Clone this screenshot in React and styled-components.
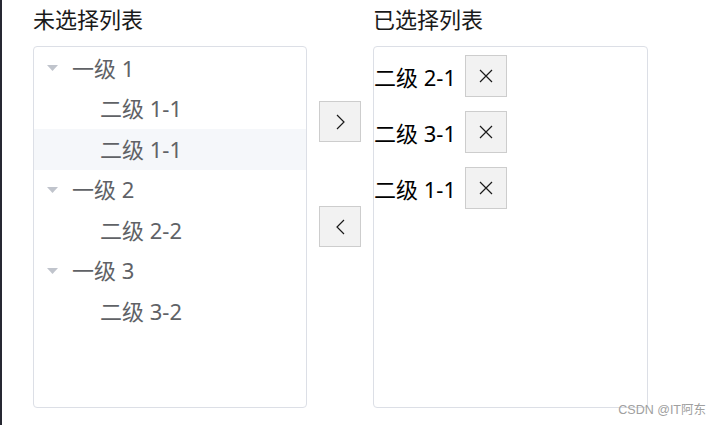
import React from 'react';
import styled, { createGlobalStyle } from 'styled-components';

const GlobalStyle = createGlobalStyle`
  html, body {
    margin: 0;
    padding: 0;
    background: #ffffff;
  }
  body {
    font-family: "Noto Sans", "Noto Sans CJK SC", sans-serif;
  }
`;

const Page = styled.div`
  position: relative;
  height: 425px;
  box-sizing: border-box;
  border-left: 2px solid #262832;
  padding-left: 31px;
  display: flex;
  align-items: flex-start;
`;

const Column = styled.div`
  display: flex;
  flex-direction: column;
`;

const Title = styled.div`
  height: 46px;
  line-height: 38px;
  font-size: 22px;
  color: #1a1a1a;
`;

const Panel = styled.div`
  box-sizing: border-box;
  width: ${(p) => p.width}px;
  height: 362px;
  border: 1px solid #dcdfe6;
  border-radius: 4px;
  padding-top: 1px;
`;

const TreeRow = styled.div`
  display: flex;
  align-items: center;
  height: 40.5px;
  padding-left: ${(p) => (p.level === 1 ? 6 : 34)}px;
  padding-bottom: 3px;
  box-sizing: border-box;
  background: ${(p) => (p.active ? '#f5f7fa' : 'transparent')};
  font-size: 22px;
  color: #606266;
`;

const Caret = styled.span`
  width: 24px;
  height: 24px;
  margin-right: 8px;
  display: flex;
  align-items: center;
  justify-content: center;
  padding-top: 3px;
  box-sizing: border-box;
`;

const Arrows = styled.div`
  display: flex;
  flex-direction: column;
  gap: 64px;
  padding: 101px 12px 0;
`;

const SquareButton = styled.button`
  width: 42px;
  height: ${(p) => p.size || 41}px;
  box-sizing: border-box;
  padding: 0;
  margin: 0;
  background: #f2f2f2;
  border: 1px solid #cdcdcd;
  border-radius: 0;
  display: flex;
  align-items: center;
  justify-content: center;
  cursor: pointer;
`;

const PickedList = styled.div`
  display: flex;
  flex-direction: column;
  gap: 14px;
  padding-top: 7px;
`;

const PickedItem = styled.div`
  display: flex;
  align-items: center;
  gap: 9px;
  font-size: 22px;
  color: #000000;
`;

const Watermark = styled.div`
  position: absolute;
  right: 15px;
  bottom: 7px;
  font-family: "Liberation Sans", "Noto Sans CJK SC", sans-serif;
  font-size: 12.5px;
  color: #a0a0a0;
`;

const tree = [
  { label: '一级 1', level: 1 },
  { label: '二级 1-1', level: 2 },
  { label: '二级 1-1', level: 2, active: true },
  { label: '一级 2', level: 1 },
  { label: '二级 2-2', level: 2 },
  { label: '一级 3', level: 1 },
  { label: '二级 3-2', level: 2 },
];

const picked = ['二级 2-1', '二级 3-1', '二级 1-1'];

function CaretDown() {
  return (
    <svg width="11" height="6" viewBox="0 0 11 6">
      <path d="M0 0 L11 0 L5.5 6 Z" fill="#c0c4cc" />
    </svg>
  );
}

function Chevron({ dir }) {
  const d = dir === 'right' ? 'M1 1 L8 8 L1 15' : 'M8 1 L1 8 L8 15';
  return (
    <svg width="9" height="16" viewBox="0 0 9 16">
      <path d={d} fill="none" stroke="#1a1a1a" strokeWidth="1.2" />
    </svg>
  );
}

function Cross() {
  return (
    <svg width="14" height="14" viewBox="0 0 14 14">
      <path d="M1 1 L13 13 M13 1 L1 13" fill="none" stroke="#1a1a1a" strokeWidth="1.2" />
    </svg>
  );
}

export default function App() {
  return (
    <>
      <GlobalStyle />
      <Page>
        <Column>
          <Title>未选择列表</Title>
          <Panel width={274}>
            {tree.map((node, i) => (
              <TreeRow key={i} level={node.level} active={node.active}>
                <Caret>{node.level === 1 && <CaretDown />}</Caret>
                {node.label}
              </TreeRow>
            ))}
          </Panel>
        </Column>
        <Arrows>
          <SquareButton><Chevron dir="right" /></SquareButton>
          <SquareButton><Chevron dir="left" /></SquareButton>
        </Arrows>
        <Column>
          <Title>已选择列表</Title>
          <Panel width={275}>
            <PickedList>
              {picked.map((label, i) => (
                <PickedItem key={i}>
                  {label}
                  <SquareButton size={42}><Cross /></SquareButton>
                </PickedItem>
              ))}
            </PickedList>
          </Panel>
        </Column>
        <Watermark>CSDN @IT阿东</Watermark>
      </Page>
    </>
  );
}
